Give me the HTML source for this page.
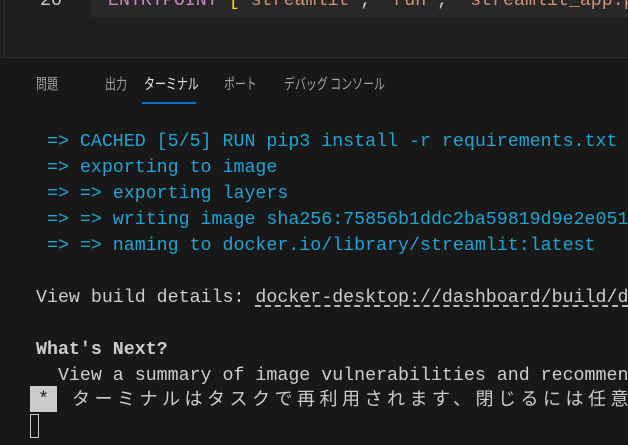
<!DOCTYPE html><html><head><style>
body{margin:0;width:628px;height:445px;overflow:hidden;background:#181818;position:relative;font-family:"Liberation Mono","Noto Sans CJK JP",monospace}
.ed{position:absolute;left:0;top:0;width:628px;height:57px;background:#1f1f1f;border-bottom:1px solid #2b2b2b}
.ed .g{position:absolute;left:4px;top:0;width:1px;height:57px;background:#2e2e2e}
.ed .hl{position:absolute;left:90px;top:0;width:538px;height:17px;background:#282828}
.ln{position:absolute;left:40px;top:-9px;color:#ccc;font-size:18.3px}
.code{position:absolute;left:108px;top:-9px;font-size:18.3px;white-space:pre;color:#ce9178}
.t{position:absolute;top:74px;font-family:"Noto Sans CJK JP",sans-serif;font-size:15px;line-height:20px;color:#a0a0a0;white-space:nowrap;transform:scaleX(0.73);transform-origin:0 0}
.ul{position:absolute;left:142px;top:102px;width:54px;height:2px;background:#0078d4}
.l{position:absolute;left:36px;font-size:18.3px;white-space:pre;color:#cccccc;line-height:26px}
.c{color:#22a3d2}
.jp{font-family:"Noto Sans CJK JP",sans-serif;letter-spacing:4.5px;font-size:18px}
</style></head><body>
<div class="ed"><div class="g"></div><div class="hl"></div>
<div class="ln">20</div>
<div class="code"><span style="color:#c586c0">ENTRYPOINT</span> <span style="color:#ffd700">[</span>"streamlit"<span style="color:#ccc">,</span> "run"<span style="color:#ccc">,</span> "streamlit_app.py"</div></div>
<div class="t" style="left:36px">問題</div>
<div class="t" style="left:105px">出力</div>
<div class="t" style="left:144px;color:#e7e7e7">ターミナル</div>
<div class="t" style="left:224px">ポート</div>
<div class="t" style="left:284px">デバッグ コンソール</div>
<div class="ul"></div>
<div class="l c" style="top:129px"> => CACHED [5/5] RUN pip3 install -r requirements.txt</div>
<div class="l c" style="top:155px"> => exporting to image</div>
<div class="l c" style="top:181px"> => => exporting layers</div>
<div class="l c" style="top:207px"> => => writing image sha256:75856b1ddc2ba59819d9e2e051</div>
<div class="l c" style="top:233px"> => => naming to docker.io/library/streamlit:latest</div>
<div class="l" style="top:285px">View build details: <span style="text-decoration:underline dashed;text-underline-offset:4px">docker-desktop://dashboard/build/d</span></div>
<div class="l" style="top:337px;font-weight:bold">What's Next?</div>
<div class="l" style="top:363px">  View a summary of image vulnerabilities and recommen</div>
<div style="position:absolute;left:30px;top:386px;width:27px;height:26px;background:#cccccc"></div>
<div class="l" style="top:387px;color:#181818;left:38px">*</div>
<div class="l" style="top:385px;left:72px"><span class="jp">ターミナルはタスクで再利用されます、閉じるには任意</span></div>
<div style="position:absolute;left:30px;top:414px;width:7px;height:22px;border:1px solid #ccc"></div>
</body></html>
